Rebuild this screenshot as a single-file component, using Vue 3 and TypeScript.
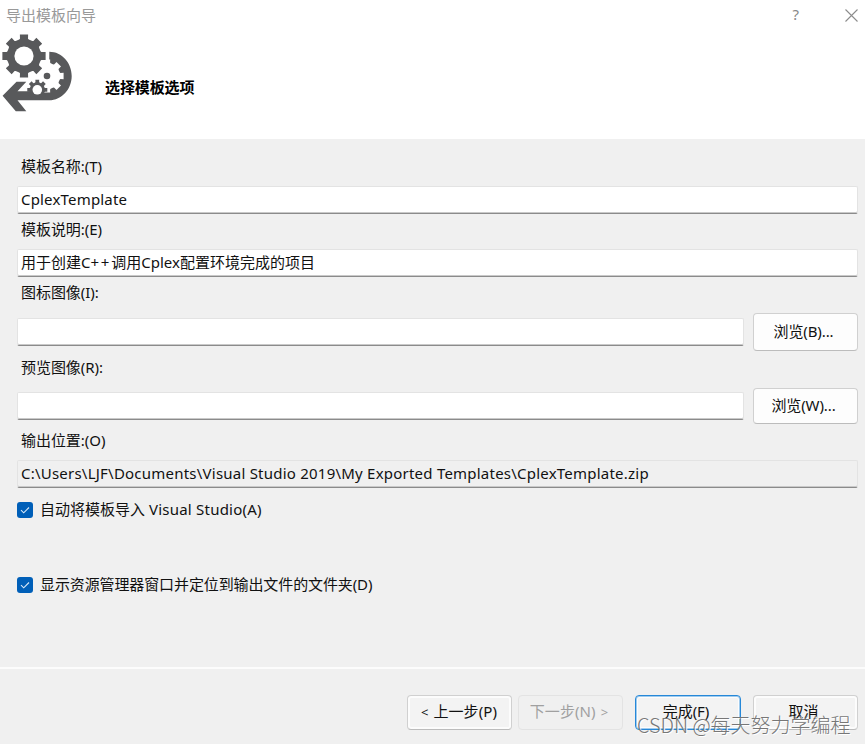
<script setup lang="ts">
import { ref } from 'vue'

function gearPath(cx: number, cy: number, inner: number, outer: number, teeth: number, turn = 0): string {
  const step = (Math.PI * 2) / teeth
  const points: string[] = []
  for (let i = 0; i < teeth; i++) {
    const mid = i * step + turn
    const corners: [number, number][] = [
      [inner, -0.36],
      [inner + 0.6, -0.29],
      [outer, -0.24],
      [outer, 0.24],
      [inner + 0.6, 0.29],
      [inner, 0.36],
    ]
    for (const [r, k] of corners) {
      const a = mid + k * step
      points.push(`${(cx + r * Math.cos(a)).toFixed(2)} ${(cy + r * Math.sin(a)).toFixed(2)}`)
    }
  }
  return `M${points.join('L')}Z`
}

const bigGear = gearPath(24, 56, 17.2, 22, 8)
const midGear = gearPath(47, 76, 13.2, 16.9, 8)
const smallGear = gearPath(37.3, 89.8, 7.6, 10.2, 8)

const name = ref('CplexTemplate')
const autoImport = ref(true)
const showExplorer = ref(true)
</script>

<template>
  <div class="wizard">
    <header class="head">
      <div class="titlebar">
        <span class="title">导出模板向导</span>
        <span class="help">?</span>
        <svg class="close" width="13" height="13" viewBox="0 0 13 13"><path d="M.5.5l12 12M12.5.5l-12 12" /></svg>
      </div>
      <div class="banner">
        <svg class="logo" width="74" height="82" viewBox="0 32 74 82">
          <path class="ink" d="M49.3 51.8C62 51.8 71.7 63 71.7 76S62 100.3 49 100.3H17.5L26.3 111.2H15.8L2.6 95.8L16.5 81.8H26.3L17.5 91.2H49Z" />
          <path class="paper" :d="midGear" />
          <circle class="ink" cx="47" cy="76" r="3.3" />
          <path class="ink" :d="smallGear" />
          <circle class="paper" cx="37.3" cy="89.8" r="4.8" />
          <path class="ink" :d="bigGear" />
          <circle class="paper" cx="24" cy="56" r="9.6" />
        </svg>
        <h1>选择模板选项</h1>
      </div>
    </header>

    <main class="body">
      <label class="lbl l1">模板名称:(T)</label>
      <div class="field"><span class="t-name">{{ name }}</span></div>
      <label class="lbl l2">模板说明:(E)</label>
      <div class="field"><span class="t-desc">用于创建C<span class="plus">++</span>调用Cplex配置环境完成的项目</span></div>
      <label class="lbl l3">图标图像(I):</label>
      <div class="row r1">
        <div class="field"></div>
        <button class="btn tall">浏览(B)...</button>
      </div>
      <label class="lbl l4">预览图像(R):</label>
      <div class="row r2">
        <div class="field"></div>
        <button class="btn mid">浏览(W)...</button>
      </div>
      <label class="lbl l5">输出位置:(O)</label>
      <div class="field readonly"><span class="t-path">C:\Users\LJF\Documents\Visual Studio 2019\My Exported Templates\CplexTemplate.zip</span></div>
      <div class="check c1" @click="autoImport = !autoImport">
        <span class="box"><svg v-if="autoImport" width="16" height="16" viewBox="0 0 16 16"><path d="M4 8.2l2.7 2.6L12 5.5" /></svg></span>
        <span class="t-auto">自动将模板导入 <span class="vs">Visual Studio(A)</span></span>
      </div>
      <div class="check c2" @click="showExplorer = !showExplorer">
        <span class="box"><svg v-if="showExplorer" width="16" height="16" viewBox="0 0 16 16"><path d="M4 8.2l2.7 2.6L12 5.5" /></svg></span>
        <span class="t-show">显示资源管理器窗口并定位到输出文件的文件夹(D)</span>
      </div>
    </main>

    <footer class="foot">
      <button class="btn prev"><i>&lt;</i> 上一步(P)</button>
      <button class="btn next" disabled>下一步(N) <i>&gt;</i></button>
      <button class="btn finish">完成(F)</button>
      <button class="btn cancel">取消</button>
    </footer>
    <div class="watermark"><span class="wm-latin">CSDN @</span>每天努力学编程</div>
  </div>
</template>

<style>
body {
  margin: 0;
  background: #f0f0f0;
  overflow: hidden;
}
</style>

<style scoped>
.wizard {
  position: relative;
  width: 865px;
  height: 744px;
  display: flex;
  flex-direction: column;
  overflow: hidden;
  background: #f0f0f0;
  color: #111;
  font: 15px/20px "Noto Sans", "Noto Sans CJK SC", sans-serif;
  white-space: nowrap;
}
.head {
  height: 139px;
  background: #fff;
}
.titlebar {
  height: 32px;
  display: flex;
  align-items: center;
  box-sizing: border-box;
  padding: 0 7px 2px 6px;
  color: #999;
}
.title {
  flex: 1;
}
.help {
  margin: -2px 46px 0 0;
  font-size: 15px;
  color: #888;
}
.close path {
  fill: none;
  stroke: #8c8c8c;
  stroke-width: 1.1;
}
.banner {
  display: flex;
}
.logo {
  display: block;
}
.ink {
  fill: #58595b;
}
.paper {
  fill: #fff;
}
h1 {
  margin: 45px 0 0 31px;
  font-size: 15px;
  line-height: 20px;
  font-weight: 700;
  letter-spacing: -0.1px;
  color: #000;
}
.body {
  height: 528px;
  box-sizing: border-box;
  padding: 0 7px 0 17px;
  display: flex;
  flex-direction: column;
}
.lbl {
  display: block;
  height: 20px;
  padding-left: 4px;
  font-size: 15px;
  letter-spacing: -0.05px;
}
.l1 { margin: 17px 0 10px; }
.l2 { margin: 5px 0 10px; }
.l3 { margin: 5px 0 11px; }
.l4 { margin: 6px 0 11px; }
.l5 { margin: 6px 0 10px; }
.field {
  height: 28px;
  box-sizing: border-box;
  padding: 2px 3px 0;
  border: 1px solid #e3e3e3;
  border-bottom: 1px solid #8b8b8b;
  border-radius: 2px;
  background: #fff;
  box-shadow: inset 0 -1px 0 #c9c9c9;
  flex: none;
}
.readonly {
  background: #f0f0f0;
}
.t-name { letter-spacing: 0.18px; }
.t-path { letter-spacing: 0.225px; }
.plus { letter-spacing: 1.8px; }
.vs { letter-spacing: 0.23px; }
.t-show { letter-spacing: -0.11px; }
.t-auto, .t-show { margin-top: -2px; }
.row {
  display: flex;
  align-items: center;
  gap: 9px;
}
.row .field {
  width: 727px;
}
.r1 { height: 38px; }
.r2 { height: 36px; }
.btn {
  width: 105px;
  height: 35px;
  flex: none;
  box-sizing: border-box;
  margin: 0;
  padding: 0 4px 2px 0;
  border: 1px solid #d0d0d0;
  border-bottom-color: #bcbcbc;
  border-radius: 4px;
  background: #fdfdfd;
  color: #111;
  font: inherit;
  letter-spacing: -0.1px;
  white-space: nowrap;
}
.btn i {
  font-style: normal;
  font-size: 13px;
  margin: 0 1px;
}
.tall { height: 38px; }
.mid { height: 36px; }
.check {
  display: flex;
  align-items: center;
  gap: 7px;
  height: 20px;
}
.c1 { margin-top: 12px; }
.c2 { margin-top: 55px; }
.box {
  width: 16px;
  height: 16px;
  border-radius: 3px;
  background: #005fb8;
}
.box svg {
  display: block;
}
.box path {
  fill: none;
  stroke: #d7e8f7;
  stroke-width: 1.1;
}
.foot {
  height: 77px;
  box-sizing: border-box;
  border-top: 2px solid #fcfcfc;
  padding: 26px 7px 0 0;
  display: flex;
  justify-content: flex-end;
}
.foot .btn {
  padding-bottom: 3px;
}
.foot .prev, .foot .next {
  padding-right: 2px;
  letter-spacing: 0.1px;
}
.prev { margin-right: 6px; }
.next {
  margin-right: 12px;
  border-color: #e3e3e3;
  background: #f0f0f0;
  color: #a0a0a0;
}
.finish {
  width: 106px;
  margin-right: 12px;
  border: 1px solid #2688d8;
}
.prev, .finish, .cancel {
  background: #f3f3f3;
  box-shadow: inset 0 0 0 2px #fcfcfc;
}
.finish {
  box-shadow: inset 0 0 0 1px #9fcbee, inset 0 0 0 2px #fcfcfc;
}
.watermark {
  position: absolute;
  left: 637px;
  top: 712px;
  font: 300 20px/26px "Noto Sans CJK SC", sans-serif;
  color: #777;
  text-shadow: 1px 1px 0 #fff;
}
.wm-latin { letter-spacing: -0.05px; }
</style>
